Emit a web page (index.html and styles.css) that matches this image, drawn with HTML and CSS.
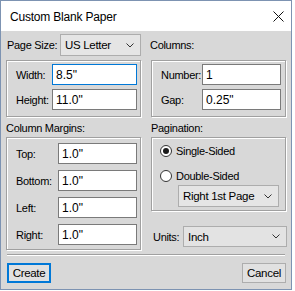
FILE: index.html
```html
<!DOCTYPE html>
<html lang="en">
<head>
    <meta charset="UTF-8">
    <title>Custom Blank Paper</title>
    <link rel="stylesheet" href="styles.css">
</head>
<body>
    <div class="dialog">
        <div class="titlebar">
            <span class="title">Custom Blank Paper</span>
            <svg class="close" width="11" height="11" viewBox="0 0 11 11">
                <path d="M0.5 0.5L10.5 10.5M10.5 0.5L0.5 10.5" stroke="#111" stroke-width="1" fill="none"/>
            </svg>
        </div>
        <div class="client">
            <div class="columns">
                <div class="col">
                    <div class="head-row">
                        <label class="page-label">Page Size:</label>
                        <div class="select page-select">
                            <span>US Letter</span>
                            <svg class="chevron" width="8" height="5" viewBox="0 0 8 5"><polyline points="0.5,0.5 4,4 7.5,0.5" fill="none" stroke="#333"/></svg>
                        </div>
                    </div>
                    <div class="group size-group">
                        <div class="field">
                            <label>Width:</label>
                            <input class="input wide focused" type="text" value='8.5"'>
                        </div>
                        <div class="field">
                            <label>Height:</label>
                            <input class="input wide" type="text" value='11.0"'>
                        </div>
                    </div>
                    <div class="caption">Column Margins:</div>
                    <div class="group margins-group">
                        <div class="field">
                            <label>Top:</label>
                            <input class="input" type="text" value='1.0"'>
                        </div>
                        <div class="field">
                            <label>Bottom:</label>
                            <input class="input" type="text" value='1.0"'>
                        </div>
                        <div class="field">
                            <label>Left:</label>
                            <input class="input" type="text" value='1.0"'>
                        </div>
                        <div class="field">
                            <label>Right:</label>
                            <input class="input" type="text" value='1.0"'>
                        </div>
                    </div>
                </div>
                <div class="col">
                    <div class="head-row">
                        <label class="columns-label">Columns:</label>
                    </div>
                    <div class="group size-group right-group">
                        <div class="field">
                            <label>Number:</label>
                            <input class="input" type="text" value="1">
                        </div>
                        <div class="field">
                            <label>Gap:</label>
                            <input class="input" type="text" value='0.25"'>
                        </div>
                    </div>
                    <div class="caption">Pagination:</div>
                    <div class="group pagination-group">
                        <div class="radio-row">
                            <span class="radio checked"></span>
                            <span>Single-Sided</span>
                        </div>
                        <div class="radio-row">
                            <span class="radio"></span>
                            <span>Double-Sided</span>
                        </div>
                        <div class="select side-select">
                            <span>Right 1st Page</span>
                            <svg class="chevron" width="8" height="5" viewBox="0 0 8 5"><polyline points="0.5,0.5 4,4 7.5,0.5" fill="none" stroke="#333"/></svg>
                        </div>
                    </div>
                    <div class="units-row">
                        <label>Units:</label>
                        <div class="select units-select">
                            <span>Inch</span>
                            <svg class="chevron" width="8" height="5" viewBox="0 0 8 5"><polyline points="0.5,0.5 4,4 7.5,0.5" fill="none" stroke="#333"/></svg>
                        </div>
                    </div>
                </div>
            </div>
            <div class="separator"></div>
            <div class="buttons">
                <button class="btn default">Create</button>
                <button class="btn">Cancel</button>
            </div>
        </div>
    </div>
</body>
</html>
```

FILE: styles.css
```css
body {
    margin: 0;
    background-color: #fff;
    font-family: "Liberation Sans", Arial, sans-serif;
    font-size: 11px;
    letter-spacing: -0.3px;
    color: #000;
}
.dialog {
    width: 292px;
    height: 290px;
    box-sizing: border-box;
    border: 1px solid #7d93b2;
    display: flex;
    flex-direction: column;
}
.titlebar {
    height: 30px;
    flex: none;
    background-color: #fff;
    display: flex;
    align-items: center;
    padding-left: 9px;
}
.title {
    font-size: 12px;
    letter-spacing: -0.2px;
    padding-top: 1px;
}
.close {
    margin-left: auto;
    margin-right: 7px;
    margin-top: 1px;
}
.client {
    flex: 1;
    background-color: #d8d8d8;
    padding: 3px 5px 0 5px;
}
.columns {
    display: grid;
    grid-template-columns: 135px 135px;
    column-gap: 10px;
}
.head-row {
    height: 22px;
    display: flex;
    align-items: center;
    margin-bottom: 4px;
}
.page-label {
    width: 55px;
    margin-left: 1px;
}
.columns-label {
    margin-left: -1px;
}
.select {
    box-sizing: border-box;
    height: 22px;
    border: 1px solid #adadad;
    background-color: #e5e5e5;
    display: flex;
    align-items: center;
    padding-left: 4px;
    font-size: 11.5px;
}
.select .chevron {
    margin-left: auto;
    margin-right: 6px;
}
.page-select {
    width: 81px;
    flex: none;
}
.group {
    border: 1px solid #a0a0a0;
    box-shadow: inset 1px 1px 0 #fff, 1px 1px 0 #fff;
}
.size-group {
    height: 57px;
    box-sizing: border-box;
    padding: 3px 3px 0 9px;
    display: flex;
    flex-direction: column;
    gap: 4px;
}
.right-group {
    padding-right: 4px;
}
.field {
    display: flex;
    align-items: center;
    height: 21px;
}
.input {
    box-sizing: border-box;
    margin: 0 0 0 auto;
    width: 79px;
    height: 21px;
    border: 1px solid #7a7a7a;
    background-color: #fff;
    padding: 0 0 0 3px;
    font-family: "Liberation Sans", Arial, sans-serif;
    font-size: 12px;
    color: #000;
    outline: none;
}
.input.wide {
    width: 85px;
}
.input.focused {
    border-color: #0078d7;
}
.caption {
    height: 17px;
    line-height: 17px;
    padding-top: 3px;
}
.margins-group {
    height: 113px;
    box-sizing: border-box;
    padding: 5px 3px 0 9px;
    display: flex;
    flex-direction: column;
    gap: 6px;
}
.pagination-group {
    height: 74px;
    box-sizing: border-box;
    padding: 4px 0 0 8px;
}
.radio-row {
    display: flex;
    align-items: center;
    gap: 4px;
    height: 18px;
}
.radio-row + .radio-row {
    margin-top: 7px;
}
.radio {
    box-sizing: border-box;
    width: 12px;
    height: 12px;
    border: 1px solid #333;
    border-radius: 50%;
    background-color: #fff;
    display: flex;
    align-items: center;
    justify-content: center;
}
.radio.checked::after {
    content: "";
    width: 6px;
    height: 6px;
    border-radius: 50%;
    background-color: #1a1a1a;
}
.side-select {
    width: 101px;
    margin-left: 18px;
}
.units-row {
    display: flex;
    align-items: center;
    margin-top: 15px;
}
.units-row label {
    margin-left: 2px;
}
.units-select {
    width: 104px;
    height: 21px;
    margin-left: auto;
    margin-right: -1px;
    background-color: #e3e3e3;
}
.separator {
    margin: 4px 1px 0 1px;
    border-top: 1px solid #a0a0a0;
    border-bottom: 1px solid #fff;
}
.buttons {
    display: flex;
    justify-content: space-between;
    margin-top: 7px;
    padding: 0 0 0 1px;
}
.btn {
    box-sizing: border-box;
    width: 44px;
    height: 20px;
    border: 1px solid #adadad;
    background-color: #e1e1e1;
    font-family: "Liberation Sans", Arial, sans-serif;
    font-size: 11.5px;
    letter-spacing: -0.3px;
    color: #000;
    padding: 0;
}
.btn.default {
    border: 2px solid #0078d7;
}
```
